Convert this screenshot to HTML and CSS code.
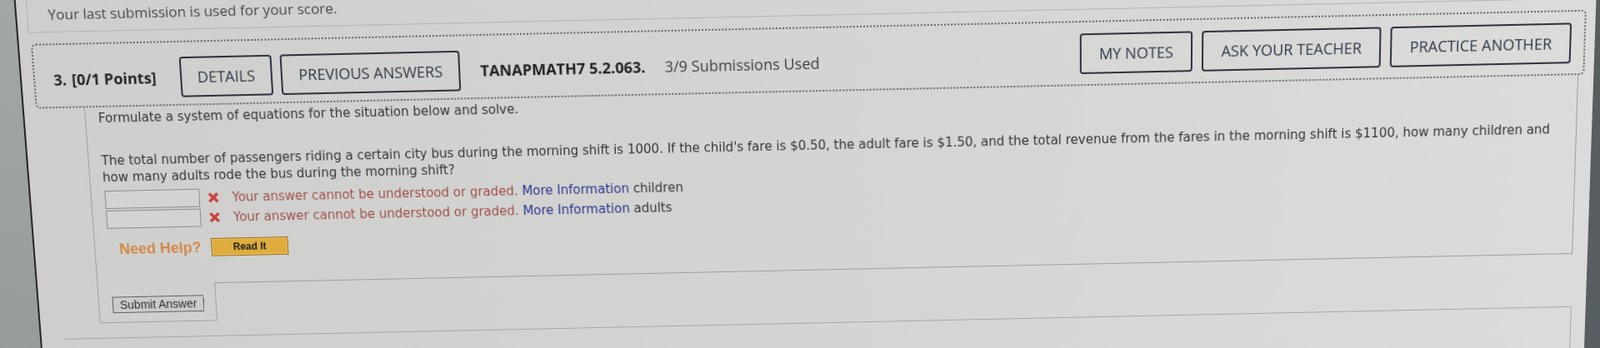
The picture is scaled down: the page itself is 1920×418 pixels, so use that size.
FILE: index.html
```html
<!DOCTYPE html>
<html lang="en">
<head>
<meta charset="utf-8">
<title>Question 3</title>
<link rel="stylesheet" href="styles.css">
</head>
<body>
<div class="stage">
  <div class="bezel-left"></div>
  <div class="screen">
    <div class="notice"><p>Your last submission is used for your score.</p></div>

    <div class="qhead">
      <div class="qhead-left">
        <span class="qtitle"><span class="num">3.</span>[0/1 Points]</span>
        <button class="btn">DETAILS</button>
        <button class="btn">PREVIOUS ANSWERS</button>
        <span class="qid">TANAPMATH7 5.2.063.</span>
        <span class="qsub">3/9 Submissions Used</span>
      </div>
      <div class="qhead-right">
        <button class="btn">MY NOTES</button>
        <button class="btn">ASK YOUR TEACHER</button>
        <button class="btn">PRACTICE ANOTHER</button>
      </div>
    </div>

    <div class="qbody">
      <p class="intro">Formulate a system of equations for the situation below and solve.</p>
      <p class="problem">The total number of passengers riding a certain city bus during the morning shift is 1000. If the child's fare is $0.50, the adult fare is $1.50, and the total revenue from the fares in the morning shift is $1100, how many children and how many adults rode the bus during the morning shift?</p>
      <div class="answers">
        <div class="arow">
          <input class="ans" type="text" aria-label="children">
          <svg class="xmark" width="15" height="14" viewBox="0 0 15 14"><path d="M2.5 2 L12.5 12 M12.5 2 L2.5 12" stroke="#c9403d" stroke-width="3.4" fill="none"/></svg>
          <span class="msg"><span class="err">Your answer cannot be understood or graded.</span> <a class="more">More Information</a> <span class="lbl">children</span></span>
        </div>
        <div class="arow">
          <input class="ans" type="text" aria-label="adults">
          <svg class="xmark" width="15" height="14" viewBox="0 0 15 14"><path d="M2.5 2 L12.5 12 M12.5 2 L2.5 12" stroke="#c9403d" stroke-width="3.4" fill="none"/></svg>
          <span class="msg"><span class="err">Your answer cannot be understood or graded.</span> <a class="more">More Information</a> <span class="lbl">adults</span></span>
        </div>
      </div>
      <div class="help">
        <span class="needhelp">Need Help?</span>
        <button class="readit">Read It</button>
      </div>
    </div>
    <div class="qtab"><button class="submit">Submit Answer</button></div>
    <div class="nextq"></div>
  </div>
  <div class="bezel-right"></div>
</div>
</body>
</html>
```
FILE: styles.css
```css
html, body {
  margin: 0;
  padding: 0;
  overflow: hidden;
  background: #d1d2cf;
}
body {
  width: 1920px;
  height: 418px;
}
.stage {
  display: flex;
  width: 1960px;
  height: 475px;
  margin: -25px 0 0 -20px;
  transform-origin: 980px 234px;
  transform: perspective(1000px) rotateX(-3.4deg) rotate(-1.25deg);
}
.bezel-left {
  flex: none;
  width: 53px;
  background: linear-gradient(180deg, #a3a7a7, #959a9a);
  border-right: 2px solid #232526;
}
.bezel-right {
  flex: none;
  width: 32px;
  background: #585d61;
}
.screen {
  flex: none;
  width: 1873px;
  background: linear-gradient(90deg, #cecfcc 0%, #d3d4d1 45%, #d9dad8 85%, #dbdcda 100%);
  font-family: "Open Sans", "Liberation Sans", sans-serif;
}

/* notice */
.notice {
  margin-left: 12px;
  border-left: 1px solid #b4b5b2;
  border-bottom: 1px solid #b4b5b2;
  padding: 14px 0 9px 24px;
}
.notice p {
  margin: 0;
  font-size: 17px;
  line-height: 22px;
  color: #474747;
}

/* question header */
.qhead {
  box-sizing: border-box;
  margin: 13px 0 0 14px;
  width: 1848px;
  height: 77px;
  border: 2px dotted #666868;
  border-radius: 6px;
  padding: 13px 15px 0 22px;
  display: flex;
  align-items: flex-start;
  justify-content: space-between;
}
.qhead-left {
  display: flex;
  align-items: center;
  margin-top: 4px;
  font-size: 18px;
}
.qhead-right {
  display: flex;
  align-items: center;
  gap: 11px;
}
.qtitle {
  font-weight: 700;
  color: #262626;
  margin-right: 28px;
}
.qtitle .num {
  margin-right: 6px;
}
.btn {
  font-family: "Open Sans", "Liberation Sans", sans-serif;
  font-size: 18px;
  line-height: 24px;
  padding: 10px 19px;
  border: 2px solid #2c3341;
  border-radius: 4px;
  background: transparent;
  color: #2d384a;
}
.qhead-right .btn {
  padding: 10px 21px;
}
.qhead-left .btn + .btn {
  margin-left: 10px;
}
.qid {
  font-weight: 700;
  color: #232323;
  margin-left: 24px;
}
.qsub {
  color: #404040;
  margin-left: 23px;
}

/* question body */
.qbody {
  box-sizing: border-box;
  margin-left: 72px;
  width: 1783px;
  height: 215px;
  border: 1px solid #9ea09e;
  border-top: none;
  padding: 3px 16px 0 15px;
  font-family: "DejaVu Sans", Verdana, sans-serif;
  font-size: 15px;
  line-height: 20px;
  color: #363636;
}
.qbody p {
  margin: 0;
}
.qbody .problem {
  margin-top: 31px;
}
.answers {
  margin-top: 6px;
  display: flex;
  flex-direction: column;
  gap: 2px;
}
.arow {
  display: flex;
  align-items: center;
  height: 22px;
}
.ans {
  box-sizing: border-box;
  width: 114px;
  height: 22px;
  margin: 0 0 0 1px;
  border: 1px solid #8b8d8b;
  background: #d3d4d1;
}
.xmark {
  margin-left: 9px;
  flex: none;
}
.msg {
  margin-left: 15px;
  white-space: nowrap;
}
.err {
  color: #a2504c;
}
.more {
  color: #2a3790;
}
.lbl {
  color: #363636;
}
.help {
  margin-top: 14px;
  padding-left: 14px;
  display: flex;
  align-items: center;
}
.needhelp {
  font-family: "Liberation Sans", Arial, sans-serif;
  font-weight: 700;
  font-size: 18px;
  color: #d3884a;
}
.readit {
  box-sizing: border-box;
  margin-left: 12px;
  width: 93px;
  height: 22px;
  padding: 0;
  border: 1px solid #9a6d24;
  box-shadow: inset 0 0 0 1px #ebc45e;
  background: #dfac3e;
  font-family: "Liberation Sans", Arial, sans-serif;
  font-weight: 700;
  font-size: 12px;
  color: #1c1c1c;
}

/* submit tab */
.qtab {
  box-sizing: border-box;
  margin: -1px 0 0 72px;
  width: 143px;
  border: 1px solid #a2a4a2;
  border-top: none;
  background: #cfd0cd;
  padding: 15px 0 11px 16px;
}
.submit {
  display: block;
  box-sizing: border-box;
  height: 20px;
  padding: 0 8px;
  border: 1px solid #5f6161;
  background: #cbccc9;
  font-family: "Liberation Sans", Arial, sans-serif;
  font-size: 14px;
  line-height: 18px;
  color: #2f2f2f;
}

/* next question */
.nextq {
  margin: 18px 0 0 27px;
  width: 1828px;
  height: 80px;
  border-top: 1px solid #a6a8a6;
  border-right: 1px solid #a6a8a6;
}
```
